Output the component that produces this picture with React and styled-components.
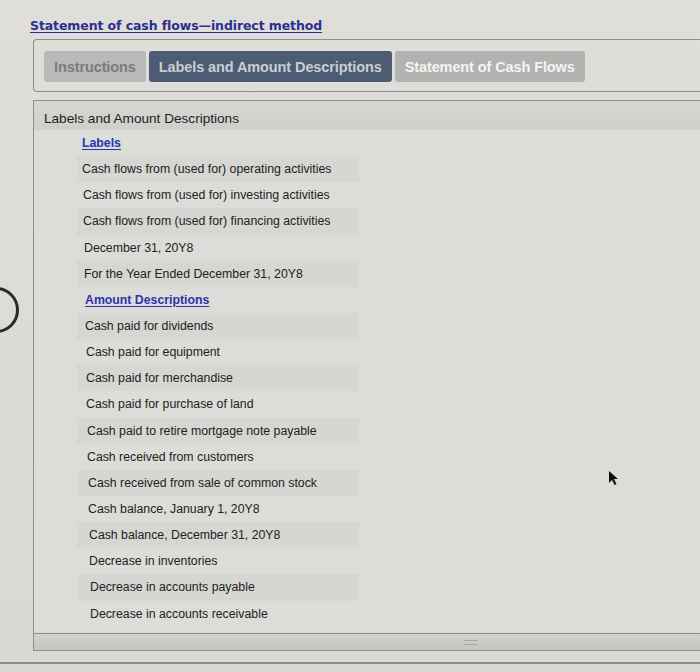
import React from "react";
import styled, { createGlobalStyle } from "styled-components";

const Global = createGlobalStyle`
  html, body { margin: 0; padding: 0; }
  body {
    background: #dcdbd7;
    font-family: "Liberation Sans", Arial, sans-serif;
    width: 700px;
    height: 672px;
    overflow: hidden;
  }
`;

const Page = styled.div`
  position: relative;
  width: 700px;
  height: 672px;
  padding: 16px 0 0 30px;
  box-sizing: border-box;
  background: linear-gradient(180deg, #dfdedb 0%, #d9d8d4 100%);
`;

const Title = styled.a`
  display: inline-block;
  font-family: "DejaVu Sans", Verdana, sans-serif;
  font-weight: bold;
  font-size: 12.5px;
  color: #2c2f8e;
  text-decoration: underline;
  text-underline-offset: 2px;
  letter-spacing: -0.1px;
`;

const TabBox = styled.div`
  margin: 5px 0 0 3px;
  height: 53px;
  box-sizing: border-box;
  border: 1px solid #8d8d8b;
  border-right: none;
  border-radius: 4px 0 0 4px;
  display: flex;
  align-items: center;
  gap: 3px;
  padding: 2px 0 0 10px;
`;

const Tab = styled.div`
  height: 31px;
  padding: 0 10px;
  display: flex;
  align-items: center;
  border-radius: 3px;
  font-weight: bold;
  font-size: 14.5px;
  letter-spacing: -0.1px;
  background: ${(p) => p.$bg};
  color: ${(p) => p.$fg};
`;

const Panel = styled.div`
  margin: 8px 0 0 3px;
  border: 1px solid #8f8f8c;
  border-right: none;
  background: #dcdcd8;
  display: flex;
  flex-direction: column;
`;

const PanelHeader = styled.div`
  height: 29px;
  padding: 6px 0 0 10px;
  box-sizing: border-box;
  display: flex;
  align-items: center;
  font-size: 13.6px;
  color: #1e1e1e;
  background: linear-gradient(180deg, #d6d6d2 0%, #cfcfcb 100%);
`;

const List = styled.div`
  padding: 0 0 6px 43px;
  display: flex;
  flex-direction: column;
`;

const Row = styled.div`
  width: 282px;
  height: 26.15px;
  display: flex;
  align-items: center;
  padding-left: ${(p) => p.$indent}px;
  box-sizing: border-box;
  font-size: 12.3px;
  color: #222;
  background: ${(p) => (p.$odd ? "#d6d6d2" : "transparent")};
`;

const Heading = styled.span`
  font-weight: bold;
  color: #2b35a8;
  text-decoration: underline;
  text-underline-offset: 2px;
`;

const BottomBar = styled.div`
  height: 16px;
  border-top: 1px solid #8f8f8c;
  background: linear-gradient(180deg, #d3d3cf 0%, #c4c4c0 100%);
  position: relative;
`;

const Grip = styled.div`
  position: absolute;
  left: 430px;
  top: 6px;
  width: 14px;
  height: 3px;
  border-top: 1px solid #a8a8a4;
  border-bottom: 1px solid #a8a8a4;
`;

const FooterLine = styled.div`
  margin: 11px 0 0 -30px;
  width: 700px;
  height: 2px;
  background: #8c8c89;
`;

const SideCircle = styled.div`
  position: absolute;
  left: -27px;
  top: 287px;
  width: 40px;
  height: 40px;
  border: 3px solid #2a2a2a;
  border-radius: 50%;
`;

const Cursor = styled.svg`
  position: absolute;
  left: 608px;
  top: 470px;
`;

const labels = [
  "Cash flows from (used for) operating activities",
  "Cash flows from (used for) investing activities",
  "Cash flows from (used for) financing activities",
  "December 31, 20Y8",
  "For the Year Ended December 31, 20Y8",
];

const amounts = [
  "Cash paid for dividends",
  "Cash paid for equipment",
  "Cash paid for merchandise",
  "Cash paid for purchase of land",
  "Cash paid to retire mortgage note payable",
  "Cash received from customers",
  "Cash received from sale of common stock",
  "Cash balance, January 1, 20Y8",
  "Cash balance, December 31, 20Y8",
  "Decrease in inventories",
  "Decrease in accounts payable",
  "Decrease in accounts receivable",
];

export default function App() {
  const rows = [
    { text: "Labels", head: true },
    ...labels.map((t) => ({ text: t })),
    { text: "Amount Descriptions", head: true },
    ...amounts.map((t) => ({ text: t })),
  ];
  return (
    <>
      <Global />
      <Page>
        <Title>Statement of cash flows—indirect method</Title>
        <TabBox>
          <Tab $bg="#b9b9b7" $fg="#7c7c7c">Instructions</Tab>
          <Tab $bg="#4d5c72" $fg="#c9ced6">Labels and Amount Descriptions</Tab>
          <Tab $bg="#b2b2b0" $fg="#f4f4f2">Statement of Cash Flows</Tab>
        </TabBox>
        <Panel>
          <PanelHeader>Labels and Amount Descriptions</PanelHeader>
          <List>
            {rows.map((r, i) => (
              <Row key={i} $odd={i % 2 === 1} $indent={5 + Math.round((i / 18) * 8)}>
                {r.head ? <Heading>{r.text}</Heading> : r.text}
              </Row>
            ))}
          </List>
          <BottomBar>
            <Grip />
          </BottomBar>
        </Panel>
        <FooterLine />
        <SideCircle />
        <Cursor width="12" height="16" viewBox="0 0 12 16">
          <path d="M1 1 L1 13 L4 10 L6.5 15 L8.5 14 L6 9 L10 9 Z" fill="#111" />
        </Cursor>
      </Page>
    </>
  );
}
